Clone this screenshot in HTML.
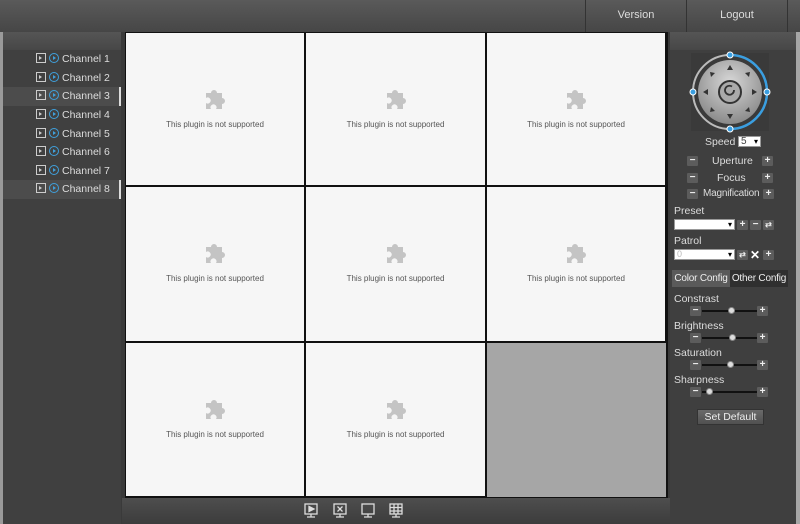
<!DOCTYPE html><html><head><meta charset="utf-8"><style>
*{margin:0;padding:0;box-sizing:border-box}
body{width:800px;height:524px;overflow:hidden;background:#3f3f3f;font-family:"Liberation Sans",sans-serif;position:relative}
.a{position:absolute;white-space:nowrap}
.top{left:0;top:0;width:800px;height:32px;background:linear-gradient(#5a5a5a,#464646)}
.tb{top:0;height:32px;border-left:1px solid #333;color:#ddd;font-size:11px;line-height:31px;text-align:center}
.hdr{background:linear-gradient(#555,#474747);height:18px}
.ch{left:3px;width:118px;height:19px;color:#ddd;font-size:10.5px;line-height:18px;padding-left:33px}
.ch.s{background:#4c4c4c;border-right:2px solid #ddd}
.sq{display:inline-block;width:10px;height:10px;border:1.5px solid #ccc;vertical-align:-1px;margin-right:3px;position:relative}
.sq:after{content:"";position:absolute;left:2px;top:1.5px;border-left:3px solid #ccc;border-top:2px solid transparent;border-bottom:2px solid transparent}
.ci{display:inline-block;width:10px;height:10px;border:1.5px solid #3fa0dc;border-radius:50%;vertical-align:-1px;margin-right:3px;position:relative}
.ci:after{content:"";position:absolute;left:2.5px;top:1.5px;border-left:3px solid #3fa0dc;border-top:2px solid transparent;border-bottom:2px solid transparent}
.cell{background:#f6f6f6;border:1px solid #111}
.cell .t{position:absolute;left:0;right:0;top:87px;text-align:center;font-size:8px;color:#555}
.cell svg{position:absolute;left:50%;margin-left:-12px;top:54px}
.lbl{color:#ddd;font-size:10.5px}
.pb{width:11px;height:10px;background:#5c5c5c;color:#eee;font-size:10px;line-height:10px;text-align:center;font-weight:bold;border-radius:1px}
.sel{background:#fff;height:11px;border:1px solid #999;font-size:9px;color:#444;line-height:9px;padding-left:2px}
.sel:after{content:"▾";position:absolute;right:2px;top:0;font-size:8px;color:#000}
.track{height:2px;background:#111}
.knob{width:7px;height:7px;border-radius:50%;background:#ddd;border:1px solid #888}
</style></head><body>
<div class="a top"></div>
<div class="a tb" style="left:585px;width:101px">Version</div>
<div class="a tb" style="left:686px;width:102px;border-right:1px solid #333">Logout</div>
<!-- left -->
<div class="a" style="left:0;top:32px;width:3px;height:492px;background:#9a9a9a"></div>
<div class="a hdr" style="left:3px;top:32px;width:118px"></div>
<div class="a" style="left:3px;top:50px;width:118px;height:474px;background:#404040"></div>
<div class="a ch" style="top:50px"><span class="sq"></span><span class="ci"></span>Channel 1</div>
<div class="a ch" style="top:69px"><span class="sq"></span><span class="ci"></span>Channel 2</div>
<div class="a ch s" style="top:87px"><span class="sq"></span><span class="ci"></span>Channel 3</div>
<div class="a ch" style="top:106px"><span class="sq"></span><span class="ci"></span>Channel 4</div>
<div class="a ch" style="top:125px"><span class="sq"></span><span class="ci"></span>Channel 5</div>
<div class="a ch" style="top:143px"><span class="sq"></span><span class="ci"></span>Channel 6</div>
<div class="a ch" style="top:162px"><span class="sq"></span><span class="ci"></span>Channel 7</div>
<div class="a ch s" style="top:180px"><span class="sq"></span><span class="ci"></span>Channel 8</div>
<!-- center -->
<div class="a" style="left:121px;top:32px;width:549px;height:492px;background:#3a3a3a"></div>
<div class="a" style="left:125px;top:32px;width:543px;height:466px;background:#111"></div>
<div id="g"></div>
<div class="a" style="left:487px;top:343px;width:179px;height:154px;background:#a6a6a6"></div>
<div class="a" style="left:122px;top:498px;width:548px;height:26px;background:linear-gradient(#4e4e4e,#3c3c3c)"></div>
<svg class="a" style="left:303px;top:503px" width="104" height="16" fill="none" stroke="#ddd" stroke-width="1.3">
<rect x="2" y="1" width="12" height="10"/><path d="M8 11v3M4 14h8"/><path d="M6 3.5l5 2.5-5 2.5z" fill="#ddd"/>
<rect x="31" y="1" width="12" height="10"/><path d="M37 11v3M33 14h8M34.5 3.5l5 5M39.5 3.5l-5 5"/>
<rect x="59" y="1" width="12" height="10"/><path d="M65 11v3M61 14h8"/>
<rect x="87" y="1" width="12" height="10"/><path d="M93 11v3M89 14h8M91 1v10M95 1v10M87 4.5h12M87 8h12"/>
</svg>
<!-- right -->
<div class="a hdr" style="left:670px;top:32px;width:126px"></div>
<div class="a" style="left:796px;top:32px;width:4px;height:492px;background:#a6a6a6"></div>
<svg class="a" style="left:688px;top:50px" width="84" height="84">
<rect x="3" y="3" width="78" height="78" fill="#3a3a3a"/>
<circle cx="42" cy="42" r="37" stroke="#bbb" stroke-width="2" fill="none"/>
<path d="M42 5A37 37 0 0 1 42 79" stroke="#3a9ee0" stroke-width="2.5" fill="none"/>
<defs><radialGradient id="d" cx="50%" cy="35%" r="65%"><stop offset="0" stop-color="#d8d8d8"/><stop offset="1" stop-color="#8a8a8a"/></radialGradient></defs>
<circle cx="42" cy="42" r="32" fill="url(#d)"/>
<circle cx="42" cy="42" r="11" fill="#aaa" stroke="#333" stroke-width="2"/>
<path d="M46 40a4.5 4.5 0 1 1-2-3.5" stroke="#333" stroke-width="1.8" fill="none"/>
<g fill="#333"><path d="M42 15l3 5h-6z"/><path d="M42 69l3-5h-6z"/><path d="M15 42l5-3v6z"/><path d="M69 42l-5-3v6z"/>
<path d="M22 22l5 1-4 4z"/><path d="M62 22l-5 1 4 4z"/><path d="M22 62l5-1-4-4z"/><path d="M62 62l-5-1 4-4z"/></g>
<g fill="#3a9ee0" stroke="#fff" stroke-width="1"><circle cx="42" cy="5" r="3"/><circle cx="42" cy="79" r="3"/><circle cx="5" cy="42" r="3"/><circle cx="79" cy="42" r="3"/></g>
</svg>
<div class="a lbl" style="left:705px;top:136px">Speed</div>
<div class="a sel" style="left:738px;top:136px;width:23px;font-size:10px">5</div>
<div class="a pb" style="left:687px;top:156px">−</div><div class="a lbl" style="left:712px;top:155px">Uperture</div><div class="a pb" style="left:762px;top:156px">+</div>
<div class="a pb" style="left:687px;top:173px">−</div><div class="a lbl" style="left:717px;top:172px">Focus</div><div class="a pb" style="left:762px;top:173px">+</div>
<div class="a pb" style="left:687px;top:189px">−</div><div class="a lbl" style="left:703px;top:188px;font-size:10px;letter-spacing:-0.2px">Magnification</div><div class="a pb" style="left:763px;top:189px">+</div>
<div class="a lbl" style="left:674px;top:205px">Preset</div>
<div class="a sel" style="left:674px;top:219px;width:61px"></div>
<div class="a pb" style="left:737px;top:220px">+</div><div class="a pb" style="left:750px;top:220px">−</div><div class="a pb" style="left:763px;top:220px;font-size:8px">⇄</div>
<div class="a lbl" style="left:674px;top:235px">Patrol</div>
<div class="a sel" style="left:674px;top:249px;width:61px;color:#bbb">0</div>
<div class="a pb" style="left:737px;top:250px;font-size:8px">⇄</div><div class="a" style="left:750px;top:248px;color:#fff;font-size:12px;font-weight:bold">✕</div><div class="a pb" style="left:763px;top:250px">+</div>
<div class="a" style="left:672px;top:270px;width:58px;height:17px;background:#5a5a5a;color:#eee;font-size:10px;line-height:17px;text-align:center;letter-spacing:-0.2px">Color Config</div>
<div class="a" style="left:730px;top:270px;width:58px;height:17px;background:#2f2f2f;color:#eee;font-size:10px;line-height:17px;text-align:center;letter-spacing:-0.2px">Other Config</div>
<div id="sl"></div>
<div class="a" style="left:697px;top:409px;width:67px;height:16px;background:linear-gradient(#6a6a6a,#505050);border:1px solid #333;color:#eee;font-size:10.5px;line-height:14px;text-align:center">Set Default</div>
<script>
var xs=[126,306,487],ys=[33,187,343],hs=[153,155,154],ws=[179,180,179],h="";
for(var r=0;r<3;r++)for(var c=0;c<3;c++){if(r==2&&c==2)continue;
h+='<div class="a cell" style="left:'+(xs[c]-1)+'px;top:'+(ys[r]-1)+'px;width:'+(ws[c]+1)+'px;height:'+(hs[r]+1)+'px"><svg width="24" height="24" viewBox="0 0 24 24"><path fill="#c4c4c4" d="M3 6h5a3 3 0 1 1 6 0h5v5a3 3 0 1 1 0 6v5h-6a3 3 0 1 0-5 0H3v-6a3 3 0 1 0 0-5z"/></svg><div class="t">This plugin is not supported</div></div>';}
document.getElementById("g").outerHTML=h;
var n=["Constrast","Brightness","Saturation","Sharpness"],k=[731,732,730,709],s="";
for(var i=0;i<4;i++){var y=293+i*27;
s+='<div class="a lbl" style="left:674px;top:'+y+'px">'+n[i]+'</div><div class="a pb" style="left:690px;top:'+(y+13)+'px">−</div><div class="a track" style="left:702px;top:'+(y+17)+'px;width:56px"></div><div class="a knob" style="left:'+(k[i]-3)+'px;top:'+(y+14)+'px"></div><div class="a pb" style="left:757px;top:'+(y+13)+'px">+</div>';}
document.getElementById("sl").outerHTML=s;
</script>
</body></html>
